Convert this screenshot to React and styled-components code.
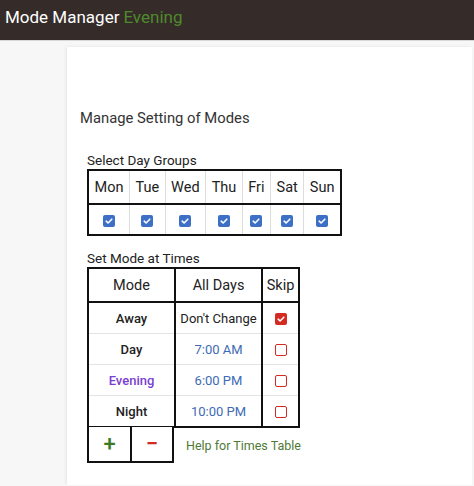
import React from 'react';
import styled, { createGlobalStyle } from 'styled-components';

const GlobalStyle = createGlobalStyle`
  html, body {
    margin: 0;
    padding: 0;
    background: #f7f7f7;
    font-family: Roboto, "Liberation Sans", Arial, sans-serif;
    color: #222;
  }
`;

const Header = styled.header`
  height: 41px;
  background: #352c29;
  border-bottom: 1px solid #d8d8d8;
  display: flex;
  align-items: center;
  padding: 0 5px 6px;
  box-sizing: border-box;
  font-size: 17px;
  color: #fff;
`;

const Accent = styled.span`
  color: #4e8a2c;
  margin-left: 4px;
`;

const Page = styled.div`
  padding: 6px 2px 0 67px;
`;

const Card = styled.main`
  background: #fff;
  box-shadow: -1px 0 3px rgba(0, 0, 0, 0.08);
  min-height: calc(100vh - 48px);
  box-sizing: border-box;
  padding: 61px 13px 0;
`;

const Title = styled.h2`
  margin: 0 0 24px;
  font-size: 14.8px;
  font-weight: 400;
  line-height: 20px;
  color: #333;
`;

const Section = styled.section`
  padding-left: 7px;
  margin-bottom: 14px;
`;

const Label = styled.div`
  font-size: 13.5px;
  font-weight: 400;
  line-height: 16px;
  color: #222;
  margin-bottom: 1px;
`;

const Grid = styled.table`
  border-collapse: collapse;
  border: 2px solid #111;
  font-size: 14.5px;
`;

const HeadCell = styled.th`
  font-weight: 400;
  height: 32px;
  padding: 0 ${(p) => p.$pad || 0}px;
  width: ${(p) => (p.$w ? `${p.$w}px` : 'auto')};
  border-left: ${(p) => (p.$strong ? '2px solid #111' : '1px solid #ddd')};
  border-bottom: 2px solid #111;
  text-align: center;
  color: #222;
`;

const Cell = styled.td`
  height: ${(p) => p.$h || 30}px;
  padding: 0;
  text-align: center;
  vertical-align: middle;
  border-left: ${(p) => (p.$strong ? '2px solid #111' : '1px solid #ddd')};
  border-top: 1px solid #e4e4e4;
  font-size: 13px;
  font-weight: ${(p) => p.$weight || 400};
  color: ${(p) => p.$color || '#222'};
`;

const Box = styled.span`
  display: inline-block;
  vertical-align: middle;
  width: ${(p) => (p.$checked ? 12 : 10)}px;
  height: ${(p) => (p.$checked ? 12 : 10)}px;
  border-radius: 2px;
  background: ${(p) => (p.$checked ? p.$color : '#fff')};
  border: ${(p) => (p.$checked ? 'none' : `1.5px solid ${p.$color}`)};
  line-height: 0;
`;

const Check = ({ color, checked }) => (
  <Box $color={color} $checked={checked}>
    {checked && (
      <svg width="12" height="12" viewBox="0 0 12 12">
        <path d="M3.2 6.2 L5.1 8 L8.8 4.2" fill="none" stroke="#fff" strokeWidth="1.6" strokeLinecap="round" strokeLinejoin="round" />
      </svg>
    )}
  </Box>
);

const Footer = styled.div`
  display: flex;
  align-items: center;
`;

const ButtonGroup = styled.div`
  display: flex;
  border: 2px solid #111;
  border-top: none;
  margin-top: -1px;
`;

const ActionButton = styled.button`
  width: ${(p) => p.$w}px;
  height: 34px;
  border: none;
  border-left: ${(p) => (p.$first ? 'none' : '2px solid #111')};
  background: #fff;
  font-family: inherit;
  font-size: 22px;
  font-weight: 500;
  color: ${(p) => p.$color};
  padding: 0;
  line-height: 1;
`;

const Help = styled.a`
  margin-left: 12px;
  font-size: 12.5px;
  color: #4f7a35;
  text-decoration: none;
`;

const days = ['Mon', 'Tue', 'Wed', 'Thu', 'Fri', 'Sat', 'Sun'];

const modes = [
  { name: 'Away', time: "Don't Change", skip: true },
  { name: 'Day', time: '7:00 AM' },
  { name: 'Evening', time: '6:00 PM', color: '#7b3fd0' },
  { name: 'Night', time: '10:00 PM' },
];

export default function App() {
  return (
    <>
      <GlobalStyle />
      <Header>
        Mode Manager<Accent>Evening</Accent>
      </Header>
      <Page>
        <Card>
          <Title>Manage Setting of Modes</Title>
          <Section>
            <Label>Select Day Groups</Label>
            <Grid>
              <thead>
                <tr>
                  {days.map((d) => (
                    <HeadCell key={d} $pad={5.5}>{d}</HeadCell>
                  ))}
                </tr>
              </thead>
              <tbody>
                <tr>
                  {days.map((d) => (
                    <Cell key={d} $h={29}>
                      <Check color="#3d6fc6" checked />
                    </Cell>
                  ))}
                </tr>
              </tbody>
            </Grid>
          </Section>
          <Section>
            <Label>Set Mode at Times</Label>
            <Grid>
              <thead>
                <tr>
                  <HeadCell $w={85}>Mode</HeadCell>
                  <HeadCell $w={85} $strong>All Days</HeadCell>
                  <HeadCell $w={35} $strong>Skip</HeadCell>
                </tr>
              </thead>
              <tbody>
                {modes.map((m) => (
                  <tr key={m.name}>
                    <Cell $weight={500} $color={m.color}>{m.name}</Cell>
                    <Cell $strong $color={m.skip ? '#222' : '#3d6bb5'}>{m.time}</Cell>
                    <Cell $strong>
                      <Check color="#d42a22" checked={!!m.skip} />
                    </Cell>
                  </tr>
                ))}
              </tbody>
            </Grid>
            <Footer>
              <ButtonGroup>
                <ActionButton $w={41} $first $color="#3d7a22">+</ActionButton>
                <ActionButton $w={42} $color="#d42a22">−</ActionButton>
              </ButtonGroup>
              <Help href="#">Help for Times Table</Help>
            </Footer>
          </Section>
        </Card>
      </Page>
    </>
  );
}
